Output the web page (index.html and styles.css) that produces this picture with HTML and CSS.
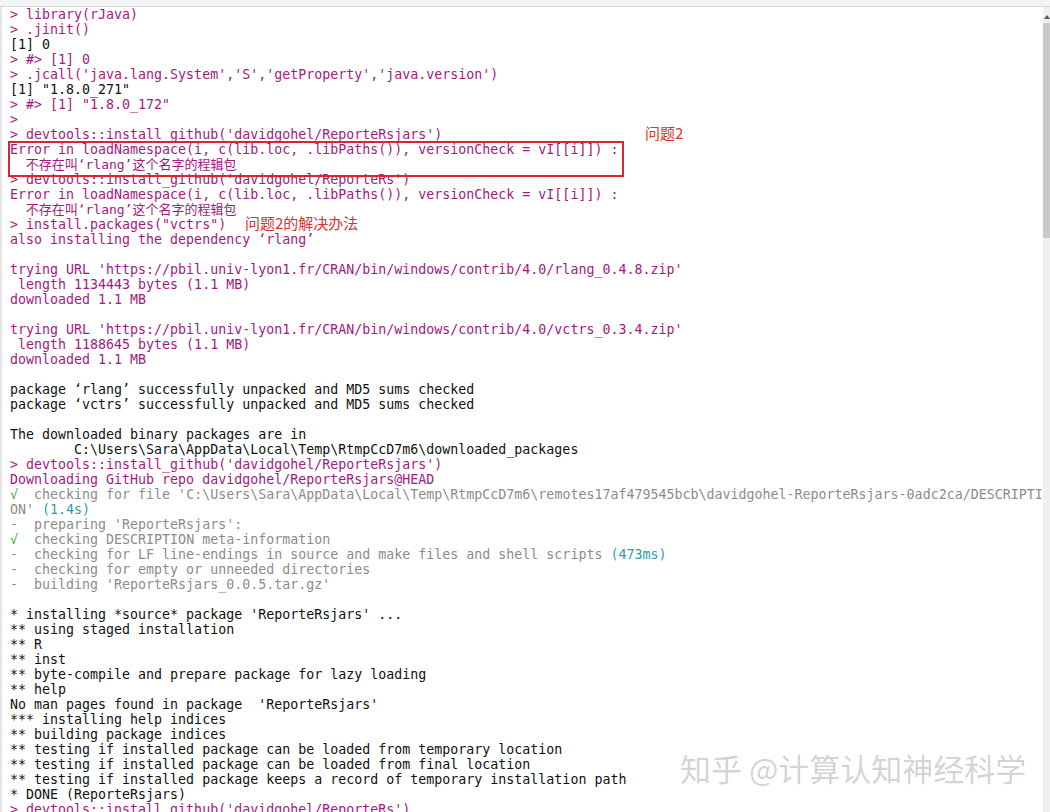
FILE: index.html
```html
<!DOCTYPE html>
<html>
<head>
<meta charset="utf-8">
<link rel="stylesheet" href="styles.css">
</head>
<body>
<div class="window">
  <div class="topbar"></div>
  <div class="body">
    <div class="console">
<div class="ln cmd">&gt; library(rJava)</div>
<div class="ln cmd">&gt; .jinit()</div>
<div class="ln">[1] 0</div>
<div class="ln cmd">&gt; #&gt; [1] 0</div>
<div class="ln cmd">&gt; .jcall('java.lang.System','S','getProperty','java.version')</div>
<div class="ln">[1] "1.8.0_271"</div>
<div class="ln cmd">&gt; #&gt; [1] "1.8.0_172"</div>
<div class="ln cmd">&gt;</div>
<div class="ln cmd">&gt; devtools::install_github('davidgohel/ReporteRsjars')</div>
<div class="ln cmd">Error in loadNamespace(i, c(lib.loc, .libPaths()), versionCheck = vI[[i]]) :</div>
<div class="ln cmd cjk">  不存在叫‘rlang’这个名字的程辑包</div>
<div class="ln cmd">&gt; devtools::install_github('davidgohel/ReporteRs')</div>
<div class="ln cmd">Error in loadNamespace(i, c(lib.loc, .libPaths()), versionCheck = vI[[i]]) :</div>
<div class="ln cmd cjk">  不存在叫‘rlang’这个名字的程辑包</div>
<div class="ln cmd">&gt; install.packages("vctrs")</div>
<div class="ln cmd">also installing the dependency ‘rlang’</div>
<div class="ln"> </div>
<div class="ln cmd">trying URL 'https://pbil.univ-lyon1.fr/CRAN/bin/windows/contrib/4.0/rlang_0.4.8.zip'</div>
<div class="ln cmd"> length 1134443 bytes (1.1 MB)</div>
<div class="ln cmd">downloaded 1.1 MB</div>
<div class="ln"> </div>
<div class="ln cmd">trying URL 'https://pbil.univ-lyon1.fr/CRAN/bin/windows/contrib/4.0/vctrs_0.3.4.zip'</div>
<div class="ln cmd"> length 1188645 bytes (1.1 MB)</div>
<div class="ln cmd">downloaded 1.1 MB</div>
<div class="ln"> </div>
<div class="ln">package ‘rlang’ successfully unpacked and MD5 sums checked</div>
<div class="ln">package ‘vctrs’ successfully unpacked and MD5 sums checked</div>
<div class="ln"> </div>
<div class="ln">The downloaded binary packages are in</div>
<div class="ln">        C:\Users\Sara\AppData\Local\Temp\RtmpCcD7m6\downloaded_packages</div>
<div class="ln cmd">&gt; devtools::install_github('davidgohel/ReporteRsjars')</div>
<div class="ln cmd">Downloading GitHub repo davidgohel/ReporteRsjars@HEAD</div>
<div class="ln gray"><span class="ok">√</span>  checking for file 'C:\Users\Sara\AppData\Local\Temp\RtmpCcD7m6\remotes17af479545bcb\davidgohel-ReporteRsjars-0adc2ca/DESCRIPTI</div>
<div class="ln gray">ON' <span class="cyan">(1.4s)</span></div>
<div class="ln gray">-  preparing 'ReporteRsjars':</div>
<div class="ln gray"><span class="ok">√</span>  checking DESCRIPTION meta-information</div>
<div class="ln gray">-  checking for LF line-endings in source and make files and shell scripts <span class="cyan">(473ms)</span></div>
<div class="ln gray">-  checking for empty or unneeded directories</div>
<div class="ln gray">-  building 'ReporteRsjars_0.0.5.tar.gz'</div>
<div class="ln"> </div>
<div class="ln">* installing *source* package 'ReporteRsjars' ...</div>
<div class="ln">** using staged installation</div>
<div class="ln">** R</div>
<div class="ln">** inst</div>
<div class="ln">** byte-compile and prepare package for lazy loading</div>
<div class="ln">** help</div>
<div class="ln">No man pages found in package  'ReporteRsjars'</div>
<div class="ln">*** installing help indices</div>
<div class="ln">** building package indices</div>
<div class="ln">** testing if installed package can be loaded from temporary location</div>
<div class="ln">** testing if installed package can be loaded from final location</div>
<div class="ln">** testing if installed package keeps a record of temporary installation path</div>
<div class="ln">* DONE (ReporteRsjars)</div>
<div class="ln cmd">&gt; devtools::install_github('davidgohel/ReporteRs')</div>

      <div class="redbox"></div>
      <div class="note note1">问题2</div>
      <div class="note note2">问题2的解决办法</div>
      <div class="watermark">知乎 @计算认知神经科学</div>
    </div>
    <div class="scrollbar">
      <div class="arrow"></div>
      <div class="thumb"></div>
    </div>
  </div>
</div>
</body>
</html>
```
FILE: styles.css
```css
html, body {
  margin: 0;
  padding: 0;
  background: #ffffff;
  overflow: hidden;
}
.window {
  width: 1050px;
  height: 812px;
  display: flex;
  flex-direction: column;
  overflow: hidden;
}
.topbar {
  height: 6px;
  background: #f3f4f5;
  border-bottom: 1px solid #d4d6d8;
  flex: none;
}
.body {
  flex: 1;
  display: flex;
  min-height: 0;
}
.console {
  position: relative;
  flex: 1;
  padding-left: 10px;
  border-left: 2px solid #e4e6e8;
  margin-left: 0;
  box-sizing: border-box;
  overflow: hidden;
  font-family: "DejaVu Sans Mono", "Liberation Mono", "Noto Sans CJK SC", monospace;
  font-size: 13.3px;
  color: #111111;
}
.ln {
  height: 15px;
  line-height: 15px;
  white-space: pre;
  padding-left: 0;
  margin-left: -2px;
}
.cmd {
  color: #a5197e;
}
.cjk {
  font-family: "DejaVu Sans Mono", "Noto Sans CJK SC", monospace;
  font-size: 13px;
}
.gray {
  color: #8c8c8c;
}
.ok {
  color: #3fa83a;
}
.cyan {
  color: #2b9aae;
}
.redbox {
  position: absolute;
  left: 6px;
  top: 134px;
  width: 612px;
  height: 32px;
  border: 2px solid #d8262e;
}
.note {
  position: absolute;
  color: #e0302e;
  font-family: "Noto Sans CJK SC", sans-serif;
  font-size: 15px;
  line-height: 18px;
}
.note1 {
  left: 643px;
  top: 117px;
}
.note2 {
  left: 243px;
  top: 207px;
}
.watermark {
  position: absolute;
  left: 678px;
  top: 742px;
  font-family: "Noto Sans CJK SC", sans-serif;
  font-size: 31px;
  line-height: 38px;
  color: rgba(120, 120, 120, 0.33);
  white-space: nowrap;
}
.scrollbar {
  width: 7px;
  flex: none;
  background: #f0f0f0;
  display: flex;
  flex-direction: column;
  align-items: stretch;
}
.arrow {
  height: 0;
  margin: 8px 1px 4px 1px;
  border-left: 3px solid transparent;
  border-right: 3px solid transparent;
  border-bottom: 4px solid #555555;
  width: 0;
}
.thumb {
  height: 215px;
  background: #c9c9c9;
}
```
